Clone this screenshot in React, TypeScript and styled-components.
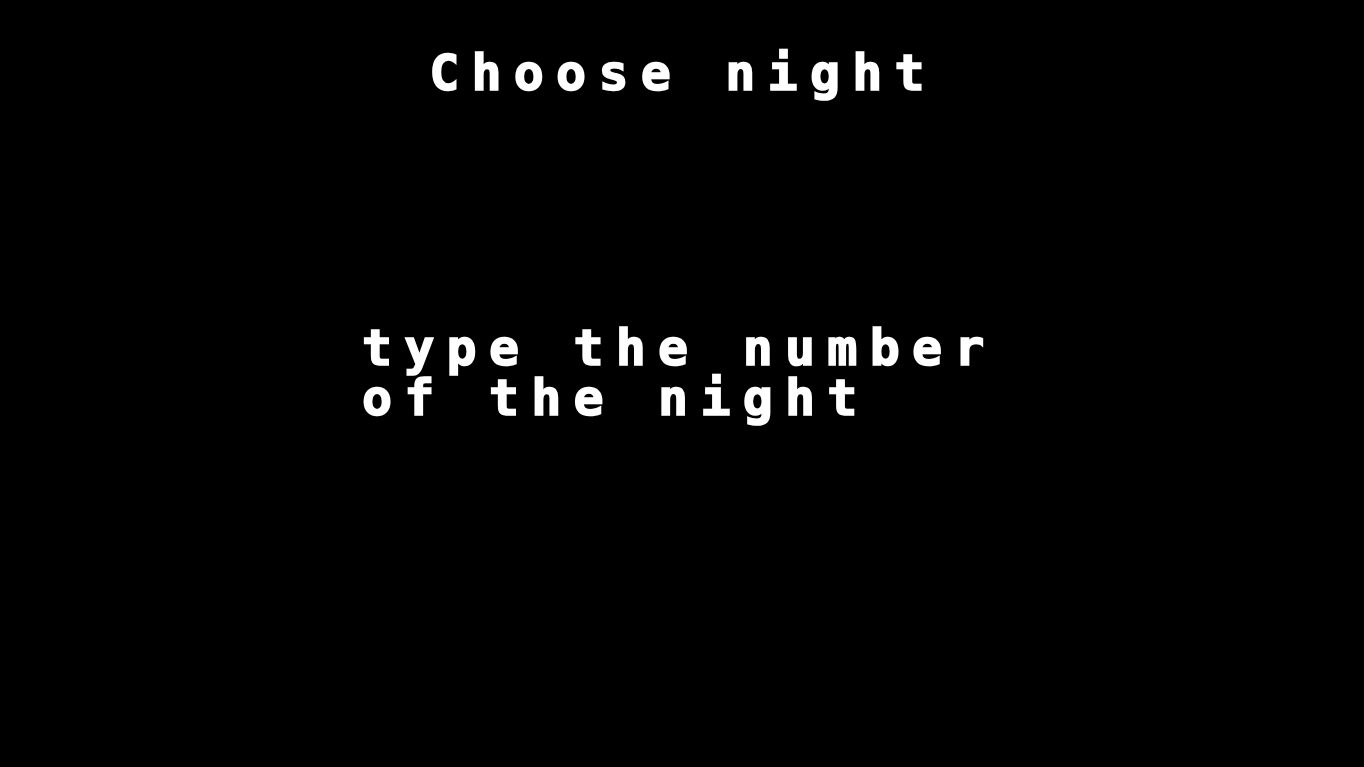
import React from 'react'
import styled, { createGlobalStyle } from 'styled-components'

const GlobalStyle = createGlobalStyle`
  html, body {
    margin: 0;
    padding: 0;
    background: #000;
  }
  body {
    min-height: 767px;
  }
`

const Screen = styled.div`
  display: flex;
  flex-direction: column;
  align-items: center;
  width: 100%;
  min-height: 767px;
  background: #000;
  color: #fff;
  font-family: "DejaVu Sans Mono", "Liberation Mono", monospace;
  font-weight: bold;
  font-size: 50px;
  line-height: 50px;
  letter-spacing: 12.2px;
  -webkit-text-stroke: 1.6px #fff;
`

const Title = styled.h1`
  margin: 48px 0 0;
  font: inherit;
  letter-spacing: inherit;
  text-align: center;
  padding-left: 2px;
`

const Prompt = styled.p`
  margin: 225px 0 0;
  width: 640px;
  font: inherit;
  letter-spacing: inherit;
  text-align: left;
`

const App: React.FC = () => {
  return (
    <Screen>
      <GlobalStyle />
      <Title>Choose night</Title>
      <Prompt>type the number of the night</Prompt>
    </Screen>
  )
}

export default App
